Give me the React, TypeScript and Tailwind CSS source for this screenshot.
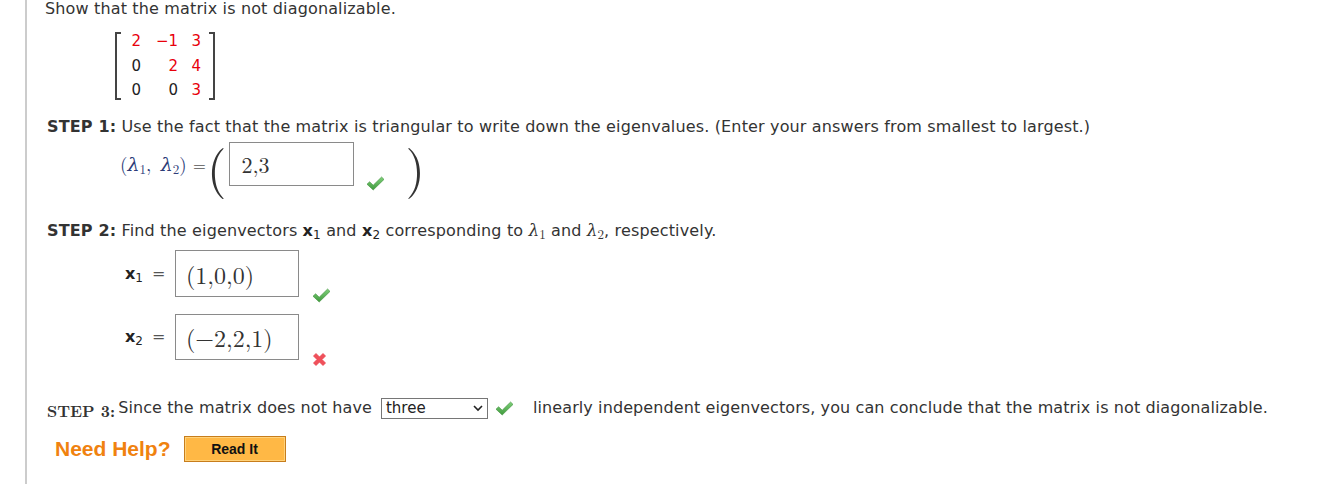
import React from "react";

const sans = { fontFamily: '"DejaVu Sans", Verdana, sans-serif' };
const serif = { fontFamily: '"Latin Modern Roman", "DejaVu Serif", "Liberation Serif", serif' };

function Check() {
  return (
    <svg width="19" height="15" viewBox="0 0 19 15" className="shrink-0">
      <defs>
        <linearGradient id="ck" x1="0" y1="0" x2="0" y2="1">
          <stop offset="0" stopColor="#7fd07a" />
          <stop offset="1" stopColor="#3f9a3d" />
        </linearGradient>
      </defs>
      <path
        d="M1 8.2 L3.6 5.8 L7.2 9.2 L15.6 1 L18 3.4 L7.2 14 Z"
        fill="url(#ck)"
        stroke="#3e8f3b"
        strokeWidth="0.6"
        strokeLinejoin="round"
      />
    </svg>
  );
}

function Cross() {
  return (
    <svg width="17" height="17" viewBox="0 0 17 17" className="shrink-0">
      <path
        d="M2.5 5 L5 2.5 L8.5 6 L12 2.5 L14.5 5 L11 8.5 L14.5 12 L12 14.5 L8.5 11 L5 14.5 L2.5 12 L6 8.5 Z"
        fill="#f0505a"
        stroke="#e8434e"
        strokeWidth="0.8"
        strokeLinejoin="round"
      />
    </svg>
  );
}

function Matrix() {
  const cells = [
    ["2", "−1", "3"],
    ["0", "2", "4"],
    ["0", "0", "3"],
  ];
  return (
    <div className="ml-[70px] mt-[14px] flex h-[68px] w-[100px]">
      <div className="w-[6px] border-y-2 border-l-2 border-[#444]" />
      <div className="grid h-[68px] grid-cols-[20px_37px_23px] content-center auto-rows-[24.5px] pr-[8px] text-[15px] leading-[24.5px] tracking-normal">
        {cells.map((row, r) =>
          row.map((c, i) => (
            <span key={r + "-" + i} className={`text-right ${c === "0" ? "text-[#222]" : "text-[#e8000b]"}`}>
              {c}
            </span>
          ))
        )}
      </div>
      <div className="w-[6px] border-y-2 border-r-2 border-[#444]" />
    </div>
  );
}

function BoldX({ n }: { n: string }) {
  return (
    <span className="font-bold text-[#222]">
      x<sub className="text-[12px] font-normal">{n}</sub>
    </span>
  );
}

function Lambda({ n, size = "text-[17px]" }: { n: string; size?: string }) {
  return (
    <span style={serif} className={`italic tracking-normal ${size}`}>
      λ<sub className="not-italic text-[13px]">{n}</sub>
    </span>
  );
}

export default function App() {
  return (
    <div className="min-h-[484px] bg-white">
      <div
        style={sans}
        className="ml-[25px] min-h-[484px] border-l-2 border-[#cccccc] pl-[18px] text-[16px] tracking-[0.15px] text-[#333] leading-[18px]"
      >
        <p>Show that the matrix is not diagonalizable.</p>

        <Matrix />

        <p className="mt-[18px] pl-[2px]">
          <span className="font-bold text-[#333]">STEP 1:</span> Use the fact that the matrix is triangular to write
          down the eigenvalues. (Enter your answers from smallest to largest.)
        </p>

        <div className="mt-[6px] ml-[75px] flex h-[48px] items-start tracking-normal">
          <div className="flex h-[44px] items-center text-[#2c3c78]" style={serif}>
            <span className="text-[19px]">(</span>
            <Lambda n="1" size="text-[19px]" />
            <span className="text-[19px]">,&nbsp;</span>
            <Lambda n="2" size="text-[19px]" />
            <span className="text-[19px]">)</span>
            <span className="ml-[6px] text-[17px] text-[#555]">=</span>
          </div>
          <span style={serif} className="ml-[1px] text-[50px] leading-[48px] font-light text-[#333]">
            (
          </span>
          <div
            style={serif}
            className="ml-[3px] flex h-[44px] w-[125px] items-center border border-[#8a8a8a] pl-[11px] text-[22px] text-[#333]"
          >
            2,3
          </div>
          <div className="ml-[12px] mt-[34px]">
            <Check />
          </div>
          <span style={serif} className="ml-[20px] text-[50px] leading-[48px] font-light text-[#333]">
            )
          </span>
        </div>

        <p className="mt-[30px] pl-[2px]">
          <span className="font-bold text-[#333]">STEP 2:</span> Find the eigenvectors <BoldX n="1" /> and{" "}
          <BoldX n="2" /> corresponding to <Lambda n="1" /> and <Lambda n="2" />, respectively.
        </p>

        <div className="mt-[10px] ml-[80px] flex items-start tracking-normal">
          <div className="flex h-[47px] w-[50px] items-center">
            <BoldX n="1" />
            <span className="ml-[9px] text-[#555]">=</span>
          </div>
          <div
            style={serif}
            className="flex h-[47px] w-[124px] items-center border border-[#8a8a8a] pl-[10px] text-[24px] text-[#333]"
          >
            (1,0,0)
          </div>
          <div className="ml-[13px] mt-[38px]">
            <Check />
          </div>
        </div>

        <div className="mt-[11px] ml-[80px] flex items-start tracking-normal">
          <div className="flex h-[46px] w-[50px] items-center">
            <BoldX n="2" />
            <span className="ml-[9px] text-[#555]">=</span>
          </div>
          <div
            style={serif}
            className="flex h-[46px] w-[124px] items-center border border-[#8a8a8a] pl-[10px] text-[24px] text-[#333]"
          >
            (−2,2,1)
          </div>
          <div className="ml-[12px] mt-[37px]">
            <Cross />
          </div>
        </div>

        <div className="mt-[28px] flex items-center pl-[2px] tracking-[0.1px]">
          <span style={serif} className="mt-[6px] text-[16px] font-bold tracking-normal text-[#333]">
            STEP 3:
          </span>
          <span className="ml-[3px]">Since the matrix does not have</span>
          <div className="ml-[9px] flex h-[21px] w-[107px] items-center justify-between border border-[#767676] px-[4px] text-[15px] tracking-normal text-[#222]">
            <span className="leading-[18px]">three</span>
            <svg width="10" height="7" viewBox="0 0 10 7">
              <path d="M1 1 L5 5 L9 1" fill="none" stroke="#222" strokeWidth="1.6" />
            </svg>
          </div>
          <div className="ml-[7px]">
            <Check />
          </div>
          <span className="ml-[19px]">
            linearly independent eigenvectors, you can conclude that the matrix is not diagonalizable.
          </span>
        </div>

        <div className="mt-[16px] ml-[10px] flex items-center tracking-normal">
          <span
            style={{ fontFamily: '"Liberation Sans", Arial, sans-serif' }}
            className="text-[21px] font-bold text-[#f0820f]"
          >
            Need Help?
          </span>
          <button
            style={{ fontFamily: '"Liberation Sans", Arial, sans-serif' }}
            className="ml-[13px] h-[26px] w-[102px] border border-[#c77d1c] bg-[#ffb845] text-[14px] font-bold text-[#111] shadow-[inset_0_0_0_1px_#ffd27a]"
          >
            Read It
          </button>
        </div>
      </div>
    </div>
  );
}
